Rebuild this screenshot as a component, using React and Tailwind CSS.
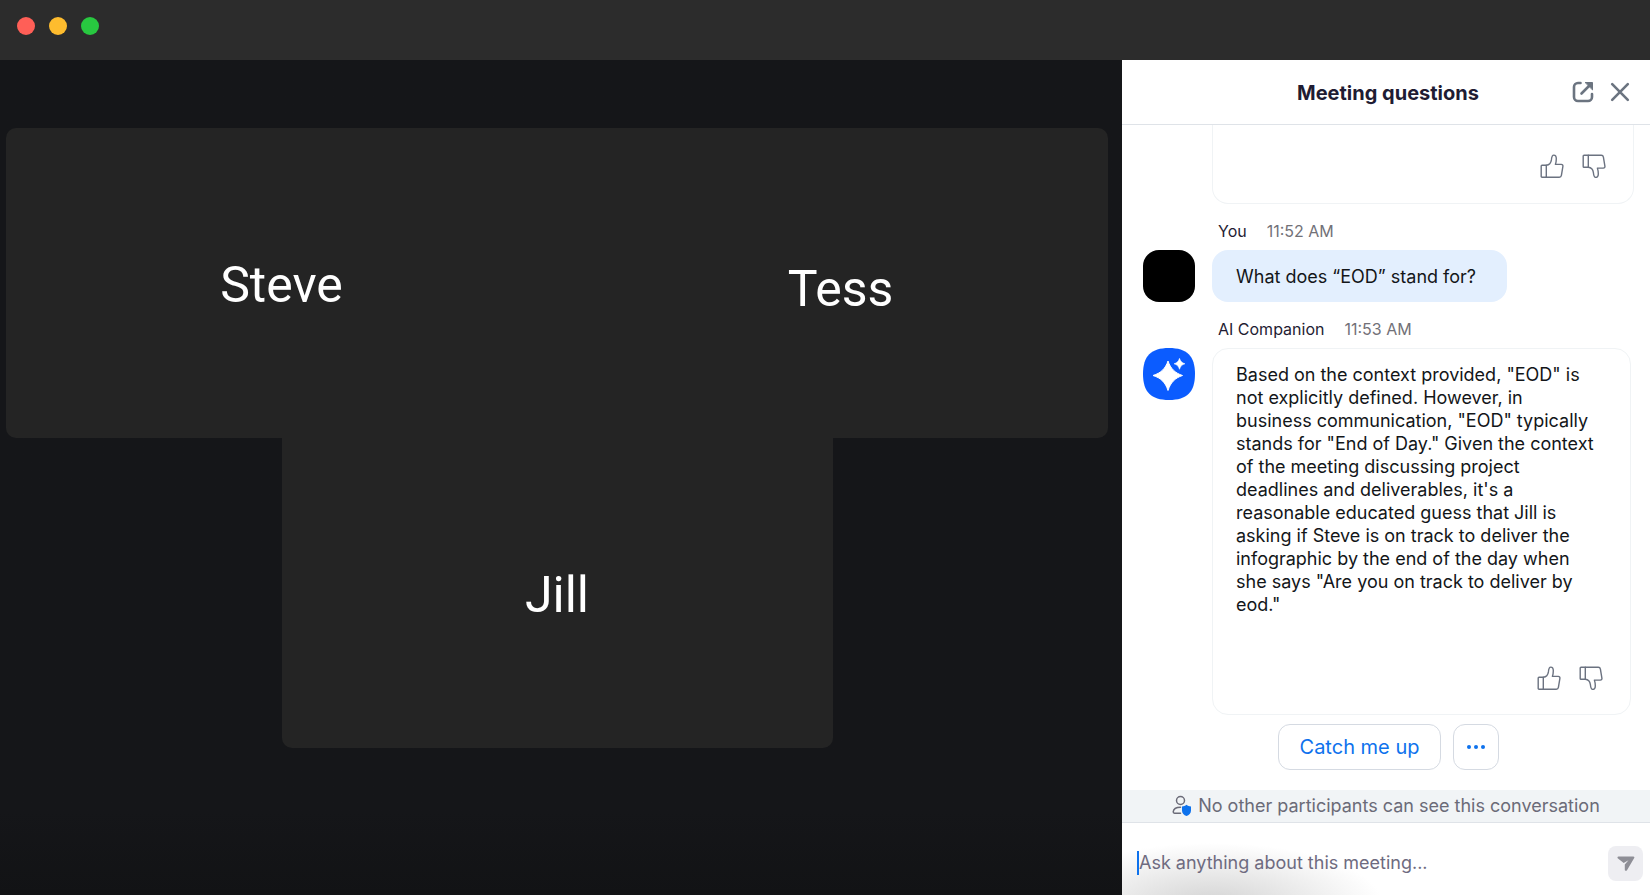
import React from "react";

const ThumbUp = () => (
  <svg viewBox="0 0 24 24" className="size-6" fill="none" stroke="currentColor" strokeWidth="1.400" strokeLinejoin="round" strokeLinecap="round" aria-hidden="true">
    <path d="M6.300 11.200H2a.8.8 0 0 0-.8.8v10.500a.8.8 0 0 0 .8.8H6.300z" />
    <path d="M6.300 11.200c2.900-.2 4.700-2.400 5.100-5.300.2-2.200.4-4.800 2.400-4.800 1.900 0 2.500 1.600 2.500 3.600 0 2-.3 3.900-.9 5.700h6c1 0 1.700.8 1.500 1.900l-1.500 9.100c-.2 1.200-.9 1.900-2.100 1.900H6.300" />
  </svg>
);

const ThumbDown = () => (
  <svg viewBox="0 0 24 24" className="size-6" fill="none" stroke="currentColor" strokeWidth="1.400" strokeLinejoin="round" strokeLinecap="round" aria-hidden="true">
    <g transform="matrix(1 0 0 -1 0 24.500)">
      <path d="M6.300 11.200H2a.8.8 0 0 0-.8.8v10.500a.8.8 0 0 0 .8.8H6.300z" />
      <path d="M6.300 11.200c2.900-.2 4.700-2.400 5.100-5.300.2-2.200.4-4.800 2.400-4.800 1.900 0 2.500 1.600 2.500 3.600 0 2-.3 3.900-.9 5.700h6c1 0 1.700.8 1.500 1.900l-1.500 9.100c-.2 1.200-.9 1.900-2.100 1.900H6.300" />
    </g>
  </svg>
);

const Feedback = () => (
  <div className="flex justify-end gap-[18px] text-[#6b7280]">
    <button type="button" aria-label="Helpful"><ThumbUp /></button>
    <button type="button" aria-label="Not helpful"><ThumbDown /></button>
  </div>
);

const Message = ({ name, time, avatar, children }) => (
  <article className="grid grid-cols-[52px_1fr] gap-x-[17px]">
    <div className="col-start-2 flex gap-5 pt-4 pb-2 pl-[6px] text-base leading-[22px]">
      <span className="text-[#1f1c33]">{name}</span>
      <time className="text-[#727178]">{time}</time>
    </div>
    <div className="col-start-1">{avatar}</div>
    <div className="flex flex-col items-start">{children}</div>
  </article>
);

const Tile = ({ name, className }) => (
  <div className={"flex items-center justify-center bg-[#242424] text-[50px] leading-[56px] text-white " + className}>
    {name}
  </div>
);

export default function App() {
  return (
    <div className="flex min-h-screen flex-col bg-[#151619] font-['Inter',sans-serif]">
      <header className="flex h-[60px] shrink-0 gap-[14px] bg-[#2c2c2c] pt-[17px] pl-[17px]">
        <button type="button" aria-label="Close window" className="size-[18px] rounded-full bg-[#ff5f57]" />
        <button type="button" aria-label="Minimize window" className="size-[18px] rounded-full bg-[#febc2e]" />
        <button type="button" aria-label="Zoom window" className="size-[18px] rounded-full bg-[#28c840]" />
      </header>

      <div className="flex flex-1">
        <main className="flex flex-1 flex-col items-center bg-linear-to-t from-[#121315] via-[#151619] via-10% to-[#151619] pt-[68px] pr-[14px] pl-[6px] font-['Roboto',sans-serif]">
          <div className="grid w-full grid-cols-2">
            <Tile name="Steve" className="h-[310px] rounded-l-[10px] pt-1" />
            <Tile name="Tess" className="rounded-r-[10px] pt-3 pl-4" />
          </div>
          <Tile name="Jill" className="h-[310px] w-1/2 rounded-b-[10px] pt-1" />
        </main>

        <aside className="flex w-[528px] flex-col bg-white">
          <div className="grid h-[65px] grid-cols-[1fr_auto_1fr] items-center border-b border-[#dfe3e8] pr-5 pl-6">
            <h1 className="col-start-2 pt-[2px] text-xl font-bold text-[#1f1c33]">Meeting questions</h1>
            <div className="flex justify-end gap-4 text-[#6b7480]">
              <button type="button" aria-label="Open in new window">
                <svg viewBox="0 0 22 22" className="size-[22px]" fill="none" stroke="currentColor" strokeWidth="2.600" strokeLinecap="round" strokeLinejoin="round">
                  <path d="M8.500 2H6a4 4 0 0 0-4 4v10a4 4 0 0 0 4 4h10a4 4 0 0 0 4-4v-3" />
                  <path d="M9.500 12.500 18.500 3.500" />
                  <path d="M13.500 1.500h7V8.500z" fill="currentColor" strokeWidth="1" />
                </svg>
              </button>
              <button type="button" aria-label="Close panel">
                <svg viewBox="0 0 20 20" className="size-5" fill="none" stroke="currentColor" strokeWidth="2.600" strokeLinecap="round">
                  <path d="M2.200 2.200 17.800 17.800M17.800 2.200 2.200 17.800" />
                </svg>
              </button>
            </div>
          </div>

          <section className="flex flex-1 flex-col pr-[19px] pl-[21px]">
            <div className="-mr-[3px] ml-[69px] h-[79px] rounded-b-2xl border border-t-0 border-[#f0f3f5] pt-[29px] pr-[27px]">
              <Feedback />
            </div>

            <Message name="You" time="11:52 AM" avatar={<div className="size-[52px] rounded-2xl bg-black" />}>
              <p className="rounded-2xl bg-[#e3effe] pt-[15px] pr-[31px] pb-[13px] pl-6 text-lg leading-6 text-[#131619]">What does “EOD” stand for?</p>
            </Message>

            <Message
              name="AI Companion"
              time="11:53 AM"
              avatar={
                <svg viewBox="0 0 52 52" className="size-[52px]" aria-hidden="true">
                  <path d="M26 0C44 0 52 8 52 26S44 52 26 52 0 44 0 26 8 0 26 0Z" fill="#0b5cff" />
                  <path d="M25 13C27.500 20.500 32 25 39.500 27.500 32 30 27.500 34.500 25 42.500 22.500 34.500 18 30 10 27.500 18 25 22.500 20.500 25 13Z" fill="#fff" stroke="#fff" strokeLinejoin="round" />
                  <path d="M36.500 10.300C37.500 13.500 39 14.800 42 15.800 39 16.700 37.500 18 36.500 21.300 35.500 18 34 16.700 31 15.800 34 14.800 35.500 13.500 36.500 10.300Z" fill="#fff" stroke="#fff" strokeWidth=".5" strokeLinejoin="round" />
                </svg>
              }
            >
              <div className="w-full rounded-2xl border border-[#f0f3f5] py-[14px] pr-[27px] pl-[23px]">
                <p className="text-lg leading-[23px] text-[#131619]">
                  Based on the context provided, "EOD" is<br />
                  not explicitly defined. However, in<br />
                  business communication, "EOD" typically<br />
                  stands for "End of Day." Given the context<br />
                  of the meeting discussing project<br />
                  deadlines and deliverables, it's a<br />
                  reasonable educated guess that Jill is<br />
                  asking if Steve is on track to deliver the<br />
                  infographic by the end of the day when<br />
                  she says "Are you on track to deliver by<br />
                  eod."
                </p>
                <div className="pt-[50px] pb-[10px]"><Feedback /></div>
              </div>
            </Message>

            <div className="flex justify-center gap-3 py-[9px] pl-[3px]">
              <button type="button" className="h-[46px] rounded-xl border border-[#d5dae2] px-[21px] text-xl text-[#0e72ed]">Catch me up</button>
              <button type="button" aria-label="More options" className="flex h-[46px] w-[46px] items-center justify-center gap-[3px] rounded-xl border border-[#d5dae2]">
                <span className="size-1 rounded-full bg-[#0e72ed]" />
                <span className="size-1 rounded-full bg-[#0e72ed]" />
                <span className="size-1 rounded-full bg-[#0e72ed]" />
              </button>
            </div>
          </section>

          <div className="flex h-[33px] items-center justify-center gap-[6px] border-b border-[#dfe3e8] bg-[#f1f4f6] text-lg text-[#6b6b78]">
            <svg viewBox="0 0 20 22" className="h-[22px] w-5" fill="none" aria-hidden="true">
              <circle cx="8.500" cy="5.500" r="4" stroke="#6b6b78" strokeWidth="1.500" />
              <path d="M8.500 12.300C4.500 12.300 1.500 14 1.200 16.800c0 .9.500 1.400 1.300 1.400H8.500" stroke="#6b6b78" strokeWidth="1.500" strokeLinecap="round" />
              <path d="M14.500 9.800c1.300 1.100 2.800 1.600 4.500 1.700v4c0 2.800-2 4.600-4.500 5.500-2.500-.9-4.500-2.700-4.500-5.500v-4c1.700-.1 3.200-.6 4.500-1.700Z" fill="#0e72ed" />
            </svg>
            <span>No other participants can see this conversation</span>
          </div>

          <form className="flex h-[72px] items-center bg-[radial-gradient(ellipse_170px_60px_at_90px_80px,#d4d4d4,#ffffff)] pt-3 pr-[7px] pb-1 pl-[15px]">
            <span className="h-6 w-[2px] bg-[#0e72ed]" />
            <input aria-label="Ask a question" placeholder="Ask anything about this meeting..." className="min-w-0 flex-1 bg-transparent text-lg text-[#131619] outline-none placeholder:text-[#6e6b80]" />
            <button type="button" aria-label="Send" className="flex size-[35px] items-center justify-center rounded-lg bg-[#eeeef2]">
              <svg viewBox="0 0 18 18" className="size-[18px]" fill="#8e8e96" aria-hidden="true">
                <path d="M1.500 2.500H16.300c1 0 1.400.8.900 1.600L10 16.200c-.6 1-2.200.8-2.200-.5V10.400L11.500 6.200 6.700 9 1 4.600C.100 3.800.400 2.500 1.500 2.500Z" />
              </svg>
            </button>
          </form>
        </aside>
      </div>
    </div>
  );
}
